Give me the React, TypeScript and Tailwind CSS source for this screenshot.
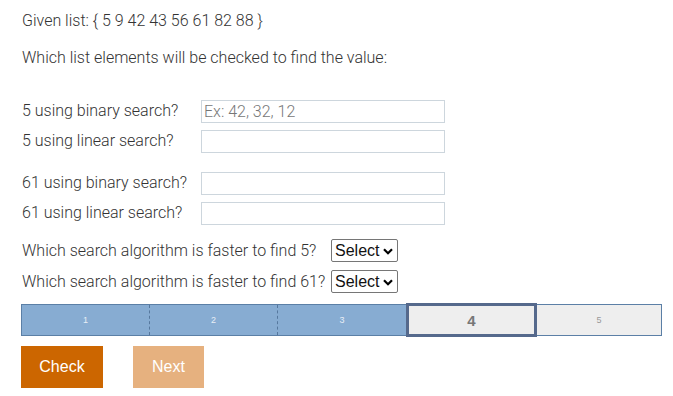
import React from 'react';

const rows1 = [
  { label: '5 using binary search?', placeholder: 'Ex: 42, 32, 12' },
  { label: '5 using linear search?', placeholder: '' },
];
const rows2 = [
  { label: '61 using binary search?', placeholder: '' },
  { label: '61 using linear search?', placeholder: '' },
];

const Row: React.FC<{ label: string; placeholder: string }> = ({ label, placeholder }) => (
  <div className="flex items-center h-[22px]">
    <span className="w-[179px] shrink-0">{label}</span>
    <input
      placeholder={placeholder}
      className="w-[244px] h-[23px] border border-[#cdd6dd] px-[2px] text-[16px] font-light text-[#333] placeholder:text-[#777] outline-none"
    />
  </div>
);

const SelectBox: React.FC = () => (
  <div className="relative w-[67px] h-[23px] border border-[#767676] rounded-[2px] flex items-center pl-[3px] font-['Liberation_Sans',Arial,sans-serif] text-[16px] text-[#111] font-normal">
    Select
    <svg className="absolute right-[4px] top-[8px]" width="10" height="7" viewBox="0 0 10 7">
      <path d="M1 1.2 L5 5.2 L9 1.2" fill="none" stroke="#000" strokeWidth="2.2" />
    </svg>
  </div>
);

export default function App() {
  const segs = [1, 2, 3, 4, 5];
  return (
    <div className="w-[673px] h-[396px] bg-white font-['Roboto',sans-serif] font-light text-[16px] text-[#333] leading-none relative">
      <div className="pl-[22px] pt-[13px]">
        <p className="h-[16px]">Given list: {'{'} 5 9 42 43 56 61 82 88 {'}'}</p>
        <p className="mt-[21px] h-[16px]">Which list elements will be checked to find the value:</p>
        <div className="mt-[34px] flex flex-col gap-[8px]">
          {rows1.map((r) => (
            <Row key={r.label} {...r} />
          ))}
        </div>
        <div className="mt-[20px] flex flex-col gap-[8px]">
          {rows2.map((r) => (
            <Row key={r.label} {...r} />
          ))}
        </div>
        <div className="mt-[15px] flex flex-col gap-[8px]">
          <div className="flex items-center h-[23px]">
            <span className="w-[309px] shrink-0">Which search algorithm is faster to find 5?</span>
            <SelectBox />
          </div>
          <div className="flex items-center h-[23px]">
            <span className="w-[309px] shrink-0 whitespace-nowrap">Which search algorithm is faster to find 61?</span>
            <SelectBox />
          </div>
        </div>
      </div>
      <div className="ml-[21px] mt-[11px] w-[641px] h-[32px] flex border border-[#5b7fa6] font-['Liberation_Sans',Arial,sans-serif]">
        {segs.map((n) => {
          if (n === 4)
            return (
              <div
                key={n}
                className="w-[131px] -my-[2px] border-[3px] border-[#55698c] bg-[#eeeeee] flex items-center justify-center text-[15px] font-bold text-[#777]"
              >
                4
              </div>
            );
          if (n === 5)
            return (
              <div key={n} className="flex-1 bg-[#eeeeee] flex items-center justify-center text-[9px] text-[#999]">
                5
              </div>
            );
          return (
            <div
              key={n}
              className={`w-[128px] bg-[#87acd2] flex items-center justify-center text-[9px] text-[#e8eef6] ${n < 3 ? 'border-r border-dashed border-[#56789e]' : ''}`}
            >
              {n}
            </div>
          );
        })}
      </div>
      <div className="ml-[21px] mt-[10px] flex gap-[30px] font-['Liberation_Sans',Arial,sans-serif] text-[16px] font-normal text-white">
        <button className="w-[82px] h-[42px] bg-[#cc6600]">Check</button>
        <button className="w-[71px] h-[42px] bg-[#e6b17f]">Next</button>
      </div>
    </div>
  );
}
